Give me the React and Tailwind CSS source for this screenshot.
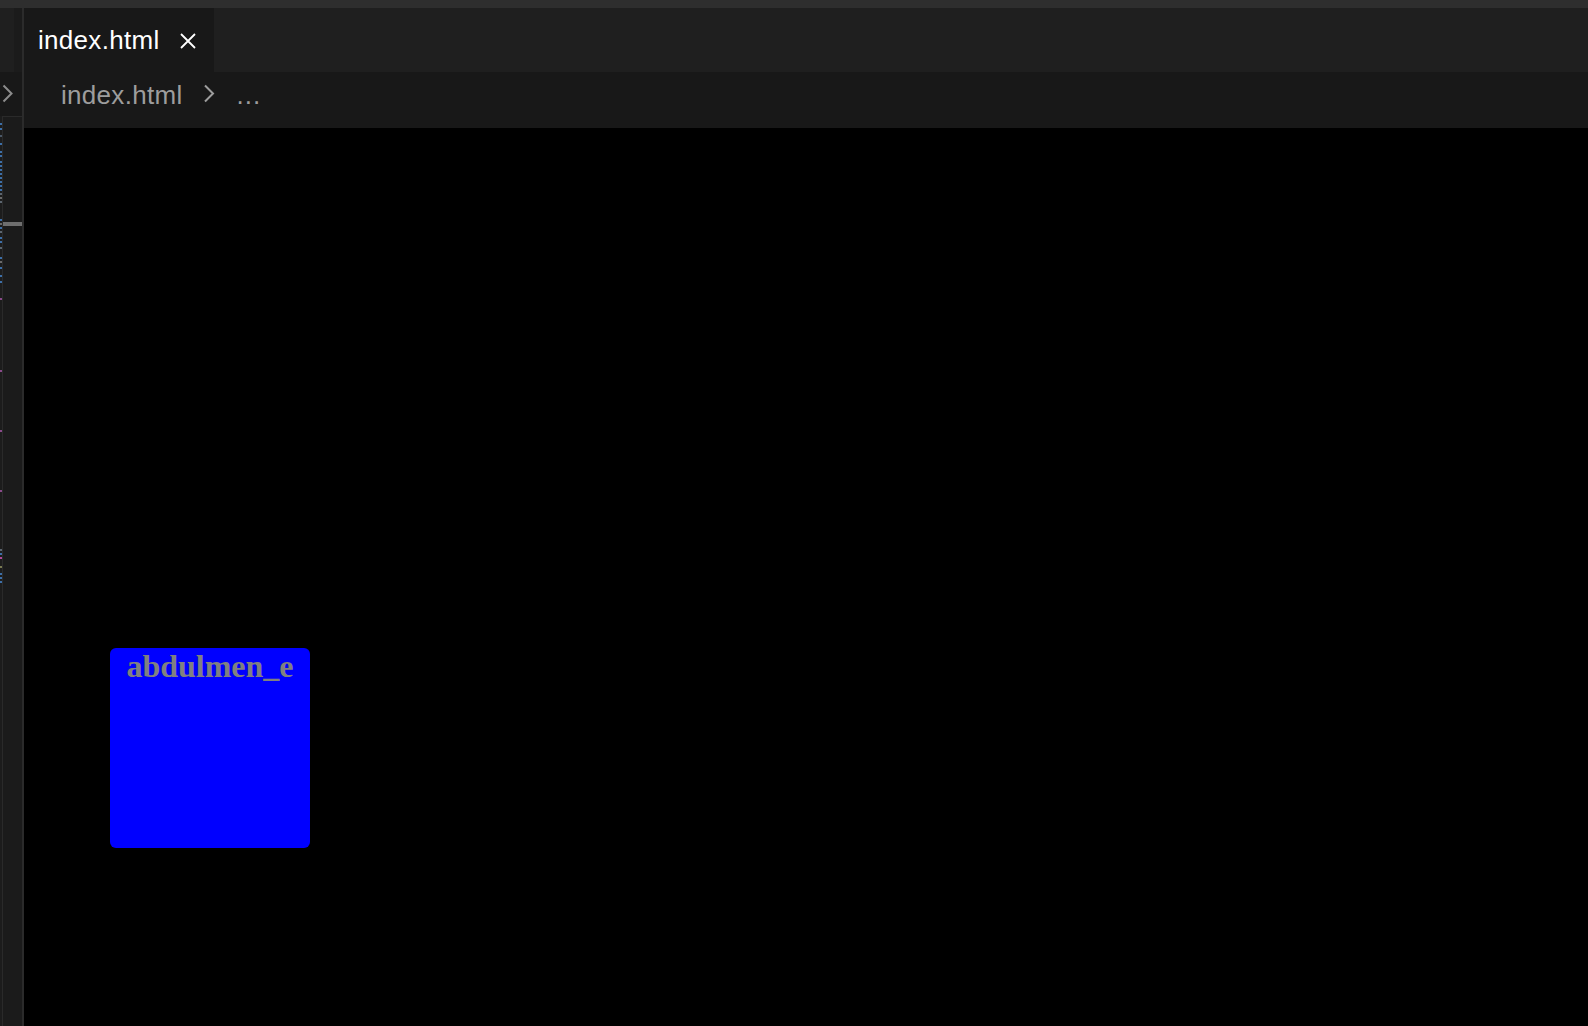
export default function App() {
  const marks = [
    [6, '#3d6fa8'], [11, '#3d6fa8'], [18, '#4a5868'], [26, '#3d6fa8'], [34, '#3d6fa8'], [38, '#3d6fa8'],
    [44, '#3d6fa8'], [48, '#3d6fa8'], [52, '#3d6fa8'], [56, '#3d6fa8'], [60, '#3d6fa8'], [64, '#3d6fa8'],
    [68, '#3d6fa8'], [72, '#3d6fa8'], [76, '#5c6670'], [80, '#6a6a6a'], [84, '#5c6670'],
    [102, '#3d6fa8'], [106, '#6a6a6a'], [110, '#3d6fa8'], [114, '#5c6670'], [120, '#3d6fa8'], [124, '#3d6fa8'],
    [130, '#5c6670'], [140, '#3d6fa8'], [144, '#6a6a6a'], [150, '#3d6fa8'], [158, '#3d6fa8'], [164, '#3d6fa8'],
    [181, '#8a4a8a'], [253, '#8a4a8a'], [313, '#8a4a8a'], [373, '#8a4a8a'],
    [432, '#5c6670'], [436, '#3d6fa8'], [440, '#b04a9a'], [449, '#7a7a52'], [456, '#3d6fa8'], [460, '#3d6fa8'], [464, '#3d6fa8'],
  ]

  return (
    <div className="flex h-[1026px] w-[1588px] flex-col overflow-hidden bg-black font-['Liberation_Sans',Arial,sans-serif]">
      {/* title strip */}
      <div className="h-[8px] shrink-0 bg-[#2e2e2e]" />

      <div className="flex min-h-0 flex-1">
        {/* left rail */}
        <div className="flex w-[22px] shrink-0 flex-col bg-[#1c1c1c]">
          <div className="flex h-[64px] shrink-0">
            <div className="w-[14px] bg-[#1f1f1f]" />
            <div className="flex-1 bg-[#1b1b1b]" />
          </div>
          <div className="flex h-[44px] shrink-0 items-start bg-[#181818] pt-[12px] pl-[2px]">
            <svg width="11" height="19" viewBox="0 0 11 19" fill="none">
              <path d="M1.5 1.5 L9.5 9.5 L1.5 17.5" stroke="#8c8c8c" strokeWidth="2" />
            </svg>
          </div>
          {/* minimap */}
          <div className="relative ml-[2px] flex-1 border-l border-t border-[#2a2a2a] bg-[#1b1b1b]">
            <svg width="22" height="500" className="absolute left-[-3px] top-0">
              {marks.map(([y, c], i) => (
                <rect key={i} x="0" y={y} width="2" height="2" fill={c} />
              ))}
              <rect x="3" y="105" width="22" height="4" fill="#6e6e6e" />
            </svg>
          </div>
        </div>

        {/* divider */}
        <div className="w-[2px] shrink-0 bg-[#2b2b2b]" />

        {/* main */}
        <div className="flex min-w-0 flex-1 flex-col">
          {/* tabs */}
          <div className="flex h-[64px] shrink-0 bg-[#1f1f1f]">
            <div className="flex w-[190px] items-center bg-[#181818] pl-[14px]">
              <span className="text-[26px] leading-none tracking-[0.3px] text-white">index.html</span>
              <svg width="18" height="18" viewBox="0 0 18 18" className="ml-[19px] mt-[1px]">
                <path d="M2 2 L16 16 M16 2 L2 16" stroke="#ffffff" strokeWidth="1.8" />
              </svg>
            </div>
          </div>

          {/* breadcrumbs */}
          <div className="flex h-[56px] shrink-0 items-start bg-[#181818] pl-[37px] pt-[8px]">
            <span className="text-[26px] leading-[30px] tracking-[0.3px] text-[#9d9d9d]">index.html</span>
            <svg width="12" height="19" viewBox="0 0 12 19" fill="none" className="ml-[20px] mt-[4px]">
              <path d="M2 1.5 L10 9.5 L2 17.5" stroke="#9d9d9d" strokeWidth="2" />
            </svg>
            <span className="ml-[22px] text-[26px] leading-[30px] tracking-[1px] text-[#9d9d9d]">...</span>
          </div>

          {/* editor preview */}
          <div className="flex-1 bg-black pl-[86px] pt-[520px]">
            <div className="h-[200px] w-[200px] rounded-[6px] bg-[#0000ff]">
              <h1 className="text-center font-['Liberation_Serif','Times_New_Roman',serif] text-[32px] font-bold leading-[37px] text-[#808080]">
                abdulmen_e
              </h1>
            </div>
          </div>
        </div>
      </div>
    </div>
  )
}
